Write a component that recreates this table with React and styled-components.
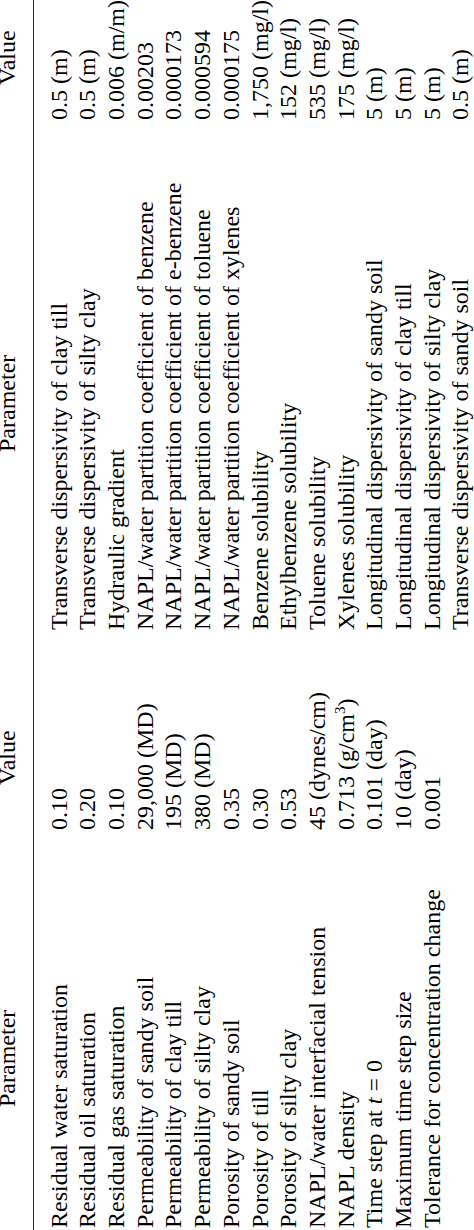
import React from "react";
import styled, { createGlobalStyle } from "styled-components";

const Global = createGlobalStyle`
  html, body { margin: 0; padding: 0; background: #ffffff; }
  body { font-family: "Liberation Serif", "Times New Roman", serif; }
`;

const COLS = "398px 200px 510px 1fr";

const Page = styled.div`
  width: 474px;
  height: 1230px;
  overflow: hidden;
  background: #ffffff;
`;

const Sheet = styled.div`
  width: 1230px;
  height: 474px;
  overflow: hidden;
  transform-origin: 0 0;
  transform: translateY(1230px) rotate(-90deg);
  font-family: "Liberation Serif", "Times New Roman", serif;
  font-size: 24px;
  color: #000000;
  box-sizing: border-box;
  padding-left: 2px;
`;

const Head = styled.div`
  display: grid;
  grid-template-columns: ${COLS};
  line-height: 28.7px;
  margin-top: -7px;
  padding-bottom: 11px;
  border-bottom: 1px solid #262626;
  margin-left: -2px;
  padding-left: 2px;
`;

const HeadCell = styled.div`
  white-space: nowrap;
  padding-left: ${(p) => p.$offset}px;
`;

const Body = styled.div`
  padding-top: 11px;
`;

const Row = styled.div`
  display: grid;
  grid-template-columns: ${COLS};
  line-height: 28.7px;
  height: 28.7px;
`;

const Cell = styled.div`
  white-space: nowrap;
`;

const Sup = styled.sup`
  font-size: 15px;
  line-height: 0;
  vertical-align: 9px;
`;

const rows = [
  ["Residual water saturation", "0.10", "Transverse dispersivity of clay till", "0.5 (m)"],
  ["Residual oil saturation", "0.20", "Transverse dispersivity of silty clay", "0.5 (m)"],
  ["Residual gas saturation", "0.10", "Hydraulic gradient", "0.006 (m/m)"],
  ["Permeability of sandy soil", "29,000 (MD)", "NAPL/water partition coefficient of benzene", "0.00203"],
  ["Permeability of clay till", "195 (MD)", "NAPL/water partition coefficient of e-benzene", "0.000173"],
  ["Permeability of silty clay", "380 (MD)", "NAPL/water partition coefficient of toluene", "0.000594"],
  ["Porosity of sandy soil", "0.35", "NAPL/water partition coefficient of xylenes", "0.000175"],
  ["Porosity of till", "0.30", "Benzene solubility", "1,750 (mg/l)"],
  ["Porosity of silty clay", "0.53", "Ethylbenzene solubility", "152 (mg/l)"],
  ["NAPL/water interfacial tension", "45 (dynes/cm)", "Toluene solubility", "535 (mg/l)"],
  ["NAPL density", <>0.713 (g/cm<Sup>3</Sup>)</>, "Xylenes solubility", "175 (mg/l)"],
  [<>Time step at <i>t</i> = 0</>, "0.101 (day)", "Longitudinal dispersivity of sandy soil", "5 (m)"],
  ["Maximum time step size", "10 (day)", "Longitudinal dispersivity of clay till", "5 (m)"],
  ["Tolerance for concentration change", "0.001", "Longitudinal dispersivity of silty clay", "5 (m)"],
  ["", "", "Transverse dispersivity of sandy soil", "0.5 (m)"],
];

export default function App() {
  return (
    <>
      <Global />
      <Page>
        <Sheet>
          <Head>
            <HeadCell $offset={121}>Parameter</HeadCell>
            <HeadCell $offset={45}>Value</HeadCell>
            <HeadCell $offset={178}>Parameter</HeadCell>
            <HeadCell $offset={35}>Value</HeadCell>
          </Head>
          <Body>
            {rows.map((r, i) => (
              <Row key={i}>
                {r.map((c, j) => (
                  <Cell key={j}>{c}</Cell>
                ))}
              </Row>
            ))}
          </Body>
        </Sheet>
      </Page>
    </>
  );
}
